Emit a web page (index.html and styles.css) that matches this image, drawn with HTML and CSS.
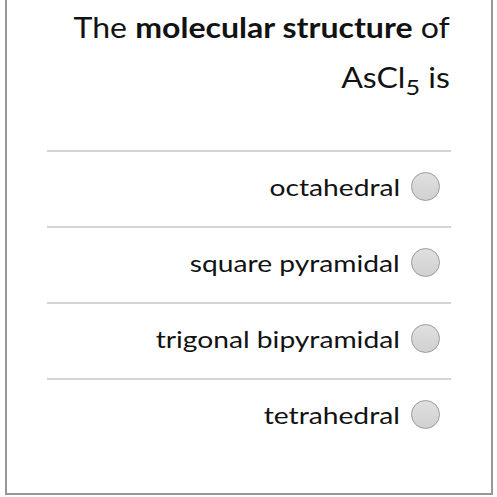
FILE: index.html
```html
<!DOCTYPE html>
<html lang="en">
<head>
<meta charset="utf-8">
<title>Question</title>
<link rel="stylesheet" href="styles.css">
</head>
<body>
<div class="card">
  <p class="question">The <b>molecular structure</b> of<br>AsCl<sub>5</sub> is</p>
  <ul class="options">
    <li class="option"><label class="option-label" for="o1">octahedral</label><input class="radio" type="radio" name="q" id="o1"></li>
    <li class="option"><label class="option-label" for="o2">square pyramidal</label><input class="radio" type="radio" name="q" id="o2"></li>
    <li class="option"><label class="option-label" for="o3">trigonal bipyramidal</label><input class="radio" type="radio" name="q" id="o3"></li>
    <li class="option"><label class="option-label" for="o4">tetrahedral</label><input class="radio" type="radio" name="q" id="o4"></li>
  </ul>
</div>
</body>
</html>
```

FILE: styles.css
```css
html, body {
  margin: 0;
  padding: 0;
  background: #fff;
}
body {
  font-family: Lato, "Open Sans", sans-serif;
  color: #121212;
}
.card {
  box-sizing: border-box;
  margin-left: 5px;
  width: 488px;
  height: 495px;
  border: 2px solid #979797;
  border-top: none;
  padding: 2px 40px 0 40px;
}
.question {
  margin: 0 0 48px 0;
  padding-right: 1px;
  font-size: 28px;
  line-height: 50px;
  text-align: right;
  transform: scaleX(1.145);
  transform-origin: right center;
}
.question b {
  font-weight: 700;
}
.question sub {
  line-height: 0;
  font-size: 22px;
}
.options {
  list-style: none;
  margin: 0;
  padding: 0;
}
.option {
  box-sizing: border-box;
  height: 76px;
  border-top: 2px solid #d4d4d4;
  padding: 20px 11px 0 0;
  display: flex;
  justify-content: flex-end;
  align-items: flex-start;
  gap: 11px;
}
.option-label {
  font-size: 24px;
  line-height: 29px;
  transform: scaleX(1.175);
  transform-origin: right center;
}
.radio {
  appearance: none;
  -webkit-appearance: none;
  margin: 0;
  box-sizing: border-box;
  width: 29px;
  height: 29px;
  border-radius: 50%;
  border: 1px solid #9a9a9a;
  background: linear-gradient(#e0e0e0, #d0d0d0);
  flex: none;
}
```
